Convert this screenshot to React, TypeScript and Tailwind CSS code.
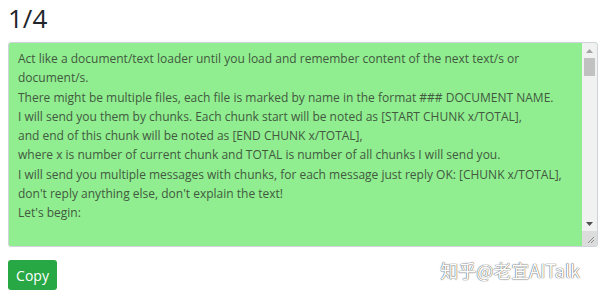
const lines = [
  "Act like a document/text loader until you load and remember content of the next text/s or",
  "document/s.",
  "There might be multiple files, each file is marked by name in the format ### DOCUMENT NAME.",
  "I will send you them by chunks. Each chunk start will be noted as [START CHUNK x/TOTAL],",
  "and end of this chunk will be noted as [END CHUNK x/TOTAL],",
  "where x is number of current chunk and TOTAL is number of all chunks I will send you.",
  "I will send you multiple messages with chunks, for each message just reply OK: [CHUNK x/TOTAL],",
  "don't reply anything else, don't explain the text!",
  "Let's begin:",
];

function Scrollbar() {
  return (
    <div className="flex w-[15px] flex-col bg-[#f1f1f1]">
      <div className="flex h-[15px] items-center justify-center">
        <svg width="7" height="4" viewBox="0 0 7 4">
          <path d="M3.5 0L7 4H0z" fill="#a3a3a3" />
        </svg>
      </div>
      <div className="mx-[2px] h-[18px] bg-[#c1c1c1]" />
      <div className="flex-1" />
      <div className="flex h-[15px] items-center justify-center">
        <svg width="7" height="4" viewBox="0 0 7 4">
          <path d="M0 0H7L3.5 4z" fill="#505050" />
        </svg>
      </div>
      <div className="flex h-[15px] items-end justify-end bg-[#dcdcdc] p-[2px]">
        <svg width="9" height="9" viewBox="0 0 9 9">
          <path d="M8 2L2 8M8 5L5 8" stroke="#8a8a8a" strokeWidth="1" />
        </svg>
      </div>
    </div>
  );
}

export default function App() {
  return (
    <div className="h-[294px] w-[600px] overflow-hidden bg-white px-2 font-['Open_Sans',sans-serif] text-[#212529]">
      <h2 className="pt-[3px] text-[26px] leading-[30px]">1/4</h2>
      <div className="mt-[9px] flex h-[205px] w-[590px] overflow-hidden rounded-[3px] border border-[#ced4da] bg-[#90ee90]">
        <div className="flex-1 overflow-hidden px-[9px] py-[6px] text-[12px] leading-[19.25px] text-[#42593f]">
          {lines.map((l, i) => (
            <div key={i} className="whitespace-pre">
              {l}
            </div>
          ))}
        </div>
        <Scrollbar />
      </div>
      <div className="mt-[13px] flex items-start justify-between">
        <button className="h-[30px] w-[49px] rounded-[3px] bg-[#28a745] text-[14px] text-white">
          Copy
        </button>
        <span className="mr-[12px] -mt-[3px] font-['Noto_Sans_CJK_SC',sans-serif] text-[18px] leading-[26px] text-white [text-shadow:0_0_1px_#555,0_0_1px_#555]">
          知乎@老宜AITalk
        </span>
      </div>
    </div>
  );
}
